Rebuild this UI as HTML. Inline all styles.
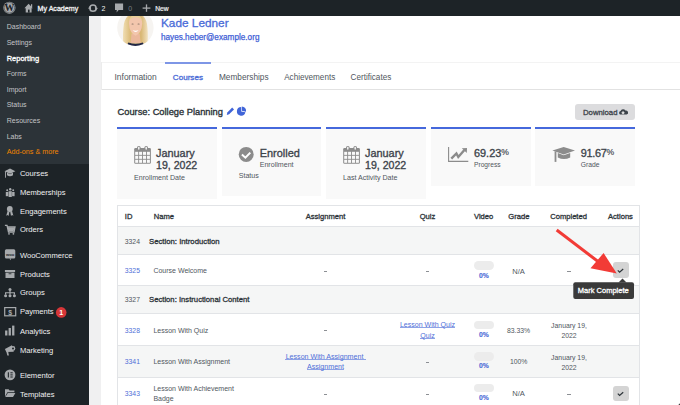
<!DOCTYPE html>
<html><head><meta charset="utf-8"><style>
html,body{margin:0;padding:0;}
body{width:680px;height:405px;overflow:hidden;position:relative;background:#f0f0f1;font-family:"Liberation Sans",sans-serif;}
.r{position:absolute;}
svg{position:absolute;left:0;top:0;}
text{font-family:"Liberation Sans",sans-serif;white-space:pre;}
</style></head><body>
<div class="r" style="left:0px;top:0px;width:680px;height:16px;background:#1d2327;"></div>
<div class="r" style="left:0px;top:16px;width:89px;height:389px;background:#1d2327;"></div>
<div class="r" style="left:0px;top:16px;width:89px;height:148px;background:#2c3338;"></div>
<div class="r" style="left:89px;top:16px;width:12px;height:389px;background:#f0f0f1;"></div>
<div class="r" style="left:101px;top:16px;width:579px;height:389px;background:#ffffff;"></div>
<div class="r" style="left:101px;top:62px;width:579px;height:1px;background:#f3f3f3;"></div>
<div class="r" style="left:101px;top:89px;width:579px;height:1px;background:#e2e2e2;"></div>
<div class="r" style="left:101px;top:62px;width:1px;height:28px;background:#ececec;"></div>
<div class="r" style="left:165px;top:62px;width:46px;height:2px;background:#7e96e6;"></div>
<div class="r" style="left:575px;top:104px;width:60px;height:16px;background:#dcdcde;border-radius:3px;"></div>
<div class="r" style="left:117px;top:127px;width:100px;height:72px;background:#f9f9f9;"></div>
<div class="r" style="left:117px;top:127px;width:100px;height:2.3px;background:#4568dc;"></div>
<div class="r" style="left:222px;top:127px;width:99px;height:69px;background:#f9f9f9;"></div>
<div class="r" style="left:222px;top:127px;width:99px;height:2.3px;background:#4568dc;"></div>
<div class="r" style="left:326px;top:127px;width:100px;height:72px;background:#f9f9f9;"></div>
<div class="r" style="left:326px;top:127px;width:100px;height:2.3px;background:#4568dc;"></div>
<div class="r" style="left:431px;top:127px;width:100px;height:58.5px;background:#f9f9f9;"></div>
<div class="r" style="left:431px;top:127px;width:100px;height:2.3px;background:#4568dc;"></div>
<div class="r" style="left:535px;top:127px;width:100px;height:58.5px;background:#f9f9f9;"></div>
<div class="r" style="left:535px;top:127px;width:100px;height:2.3px;background:#4568dc;"></div>
<div class="r" style="left:117px;top:205px;width:523px;height:1px;background:#e2e4e7;"></div>
<div class="r" style="left:117px;top:205px;width:1px;height:200px;background:#e2e4e7;"></div>
<div class="r" style="left:639px;top:205px;width:1px;height:200px;background:#e2e4e7;"></div>
<div class="r" style="left:118px;top:226px;width:521px;height:1px;background:#e2e4e7;"></div>
<div class="r" style="left:118px;top:227px;width:521px;height:27px;background:#f5f6f6;"></div>
<div class="r" style="left:118px;top:254px;width:521px;height:1px;background:#e2e4e7;"></div>
<div class="r" style="left:118px;top:285px;width:521px;height:1px;background:#e2e4e7;"></div>
<div class="r" style="left:118px;top:286px;width:521px;height:27px;background:#f5f6f6;"></div>
<div class="r" style="left:118px;top:313px;width:521px;height:1px;background:#e2e4e7;"></div>
<div class="r" style="left:118px;top:345px;width:521px;height:1px;background:#e2e4e7;"></div>
<div class="r" style="left:118px;top:346px;width:521px;height:31px;background:#f5f6f6;"></div>
<div class="r" style="left:118px;top:377px;width:521px;height:1px;background:#e2e4e7;"></div>
<div class="r" style="left:323.8px;top:271px;width:3.5px;height:0.8px;background:#8c8f94;"></div>
<div class="r" style="left:425.8px;top:271px;width:3.5px;height:0.8px;background:#8c8f94;"></div>
<div class="r" style="left:567.3px;top:271px;width:3.5px;height:0.8px;background:#8c8f94;"></div>
<div class="r" style="left:323.8px;top:330px;width:3.5px;height:0.8px;background:#8c8f94;"></div>
<div class="r" style="left:425.8px;top:362px;width:3.5px;height:0.8px;background:#8c8f94;"></div>
<div class="r" style="left:323.8px;top:394px;width:3.5px;height:0.8px;background:#8c8f94;"></div>
<div class="r" style="left:425.8px;top:394px;width:3.5px;height:0.8px;background:#8c8f94;"></div>
<div class="r" style="left:567.3px;top:394px;width:3.5px;height:0.8px;background:#8c8f94;"></div>
<div class="r" style="left:399.85px;top:327.4px;width:55.3px;height:0.7px;background:#8da2e6;"></div>
<div class="r" style="left:420.25px;top:338.4px;width:14.5px;height:0.7px;background:#8da2e6;"></div>
<div class="r" style="left:285.45px;top:359.4px;width:80.1px;height:0.7px;background:#8da2e6;"></div>
<div class="r" style="left:306.95px;top:369.4px;width:37.1px;height:0.7px;background:#8da2e6;"></div>
<div class="r" style="left:474px;top:261px;width:20px;height:8.6px;background:#ececec;border-radius:5px;"></div>
<div class="r" style="left:474px;top:320.5px;width:20px;height:8.6px;background:#ececec;border-radius:5px;"></div>
<div class="r" style="left:474px;top:352px;width:20px;height:8.6px;background:#ececec;border-radius:5px;"></div>
<div class="r" style="left:474px;top:383.8px;width:20px;height:8.6px;background:#ececec;border-radius:5px;"></div>
<div class="r" style="left:613px;top:262px;width:15.5px;height:15.8px;background:#d4d4d4;border-radius:3px;"></div>
<div class="r" style="left:613px;top:385.5px;width:15.5px;height:15.8px;background:#d4d4d4;border-radius:3px;"></div>
<svg style="left:117px;top:16px" width="37" height="30" viewBox="117 16 37 30">
<defs><clipPath id="av"><circle cx="135.4" cy="27.8" r="18.2"/></clipPath>
<linearGradient id="hair" x1="0" y1="0" x2="1" y2="0"><stop offset="0" stop-color="#f0deb4"/><stop offset="0.3" stop-color="#dcbb78"/><stop offset="0.5" stop-color="#e8cd95"/><stop offset="0.72" stop-color="#d8b672"/><stop offset="1" stop-color="#f2e2c0"/></linearGradient></defs>
<g clip-path="url(#av)">
<rect x="117" y="9" width="37" height="37" fill="#f6f4f1"/>
<path d="M123.3 44 Q122.6 36 123.4 28 Q124.3 13.5 135.5 13 Q146.7 13.5 147.5 28 Q148.2 36 147.6 42 Q144 44 141 44 L130 44 Q126 44 123.3 44 Z" fill="url(#hair)"/>
<path d="M131.6 34 L139.6 34 L140.8 43 L130.6 43 Z" fill="#ebb89c"/>
<path d="M129 23.5 Q129 16.2 135.6 15.9 Q142.2 16.2 142.2 23.5 Q142 32.5 135.6 35.8 Q129.2 32.5 129 23.5 Z" fill="#f3c6ad"/>
<path d="M128.8 21.5 Q129.3 15.3 135.6 15 Q141.9 15.3 142.4 21.5 Q139.5 17.2 135.6 17.3 Q131.7 17.2 128.8 21.5 Z" fill="#e9cf98"/>
<ellipse cx="132.6" cy="24" rx="1.1" ry="0.6" fill="#8a7466"/><ellipse cx="138.6" cy="24" rx="1.1" ry="0.6" fill="#8a7466"/>
<path d="M132.6 30.2 Q135.6 33.6 138.6 30.2 Q135.6 31.1 132.6 30.2 Z" fill="#ffffff"/>
<path d="M126.5 46 L128.4 42.4 Q135.6 45.2 142.8 42.4 L144.6 46 Z" fill="#232846"/>
</g></svg>
<svg width="680" height="405" viewBox="0 0 680 405">
<circle cx="9.4" cy="7.8" r="6.1" fill="#a7aaad"/>
<circle cx="9.4" cy="7.8" r="5.3" fill="none" stroke="#1d2327" stroke-width="0.5"/>
<text x="9.4" y="11.4" style="font-family:&quot;Liberation Serif&quot;,serif" font-weight="bold" font-size="9.8" text-anchor="middle" fill="#1d2327">W</text>
<path d="M24.4 8.3 L28.6 3.8 L32.9 8.3 L31.6 8.3 L31.6 12.6 L25.7 12.6 L25.7 8.3 Z" fill="#a7aaad"/>
<rect x="31" y="4.2" width="1.2" height="2.8" fill="#a7aaad"/>
<rect x="28" y="9.6" width="1.6" height="3" fill="#1d2327"/>
<circle cx="93" cy="8.2" r="3.1" fill="none" stroke="#a7aaad" stroke-width="1.5"/>
<path d="M88.1 8.4 L90.2 5.6 L91.2 9.2 Z" fill="#a7aaad"/>
<path d="M97.9 8 L95.8 10.8 L94.8 7.2 Z" fill="#a7aaad"/>
<path d="M115 3.6 H123.1 V9.9 H118.6 L116.6 12.4 L116.8 9.9 H115 Z" fill="#a7aaad"/>
<rect x="142.6" y="7.45" width="7.8" height="1.3" fill="#a7aaad"/>
<rect x="145.85" y="4.4" width="1.3" height="7.4" fill="#a7aaad"/>
<path d="M4.5 171.2 L10 168.5 L15.4 171.2 L10 173.8 Z" fill="#a7aaad"/>
<path d="M7 172.6 V175.3 Q10 177 13 175.3 V172.6 L10 174.2 Z" fill="#a7aaad"/>
<rect x="5.1" y="171.5" width="0.9" height="6.2" fill="#a7aaad"/>
<circle cx="10.2" cy="189.3" r="1.2" fill="#a7aaad"/><circle cx="7.2" cy="190.3" r="1" fill="#a7aaad"/><circle cx="13.2" cy="190.3" r="1" fill="#a7aaad"/>
<path d="M8.6 191.2 H11.8 V197 H8.6 Z" fill="#a7aaad"/><path d="M5.8 192 H8.3 V196.2 H5.8 Z" fill="#a7aaad"/><path d="M12.1 192 H14.6 V196.2 H12.1 Z" fill="#a7aaad"/>
<circle cx="9.8" cy="209" r="2.9" fill="#a7aaad"/>
<path d="M7.6 211 L6.2 215.7 L7.6 215 L8.6 216 L9.4 211.8 Z M12 211 L13.4 215.7 L12 215 L11 216 L10.2 211.8 Z" fill="#a7aaad"/>
<path d="M4.9 225.4 H7 L8.5 232 H14 L15 227 H7.6" fill="none" stroke="#a7aaad" stroke-width="1.3"/>
<path d="M7.6 227.5 H14.6 L13.6 231.2 H8.4 Z" fill="#a7aaad"/>
<circle cx="9" cy="233.8" r="0.9" fill="#a7aaad"/><circle cx="13.4" cy="233.8" r="0.9" fill="#a7aaad"/>
<rect x="4.9" y="249.3" width="10.4" height="9.2" rx="1.5" fill="#a7aaad"/>
<path d="M9.5 258.4 L10.3 260.2 L11.2 258.4 Z" fill="#a7aaad"/>
<text x="10.1" y="256" font-family="Liberation Sans" font-weight="bold" font-size="4.2" text-anchor="middle" fill="#1d2327">woo</text>
<rect x="4.9" y="270" width="10.2" height="2" fill="#a7aaad"/>
<rect x="5.5" y="272.6" width="9" height="5.4" fill="#a7aaad"/>
<rect x="8.6" y="273.4" width="2.8" height="0.8" fill="#1d2327"/>
<circle cx="10" cy="289.5" r="1.5" fill="#a7aaad"/>
<path d="M9.4 290.5 H10.6 V292.3 H15 V294.5 H13.8 V293.3 H10.6 V294.5 H9.4 V293.3 H6.2 V294.5 H5 V292.3 H9.4 Z" fill="#a7aaad"/>
<circle cx="5.6" cy="295.8" r="1.5" fill="#a7aaad"/><circle cx="10" cy="295.8" r="1.5" fill="#a7aaad"/><circle cx="14.4" cy="295.8" r="1.5" fill="#a7aaad"/>
<rect x="4.7" y="307.6" width="11" height="8.2" fill="none" stroke="#a7aaad" stroke-width="1.2"/>
<text x="10.2" y="314.5" font-family="Liberation Sans" font-weight="bold" font-size="7" text-anchor="middle" fill="#a7aaad">$</text>
<rect x="5.1" y="330.5" width="2.3" height="5" fill="#a7aaad"/><rect x="8.6" y="328" width="2.3" height="7.5" fill="#a7aaad"/><rect x="12.1" y="325.6" width="2.3" height="9.9" fill="#a7aaad"/>
<path d="M4.9 349 L12 345.2 L13.8 351.8 L6.3 352 Z" fill="#a7aaad"/>
<circle cx="13" cy="348.4" r="2.3" fill="#a7aaad"/><circle cx="13" cy="348.4" r="1" fill="#1d2327"/>
<path d="M6.3 351.5 L8.2 351.5 L8.9 355.6 L7.3 355.6 Z" fill="#a7aaad"/>
<circle cx="10" cy="374.9" r="5.4" fill="#a7aaad"/>
<rect x="7.8" y="372.3" width="1.1" height="5.2" fill="#1d2327"/>
<rect x="10.4" y="372.3" width="2.3" height="1" fill="#1d2327"/><rect x="10.4" y="374.4" width="2.3" height="1" fill="#1d2327"/><rect x="10.4" y="376.5" width="2.3" height="1" fill="#1d2327"/>
<path d="M5 389.2 H8.6 L9.6 390.4 H14.4 V392.2 H7.4 L5 396.8 Z" fill="#a7aaad"/>
<path d="M7.8 392.9 H15.4 L13 397.1 H5.3 Z" fill="#a7aaad"/>
<circle cx="61.2" cy="312.4" r="5.3" fill="#d63638"/>
<text x="61.2" y="315" font-family="Liberation Sans" font-weight="bold" font-size="7" text-anchor="middle" fill="#ffffff">1</text>
<path d="M226.8 115 L227.3 112.5 L232.2 107.6 L234 109.4 L229.1 114.3 Z" fill="#4165d8"/>
<path d="M241.2 111.4 L241.2 107.1 A4.3 4.3 0 1 0 245.4 112.3 Z" fill="#4165d8"/>
<path d="M241.8 110.8 L241.8 106.5 A4.3 4.3 0 0 1 246 111.7 Z" fill="#4165d8"/>
<rect x="134.2" y="148.1" width="16.7" height="15.7" rx="1.2" fill="#8c8c8c"/><rect x="137.0" y="145.9" width="3.6" height="4.6" rx="1.6" fill="#8c8c8c"/><rect x="138.1" y="146.8" width="1.4" height="3" rx="0.7" fill="#f9f9f9"/><rect x="144.39999999999998" y="145.9" width="3.6" height="4.6" rx="1.6" fill="#8c8c8c"/><rect x="145.49999999999997" y="146.8" width="1.4" height="3" rx="0.7" fill="#f9f9f9"/><rect x="135.20" y="151.80" width="3.0" height="3.07" fill="#f9f9f9"/><rect x="135.20" y="155.77" width="3.0" height="3.07" fill="#f9f9f9"/><rect x="135.20" y="159.74" width="3.0" height="3.07" fill="#f9f9f9"/><rect x="139.10" y="151.80" width="3.0" height="3.07" fill="#f9f9f9"/><rect x="139.10" y="155.77" width="3.0" height="3.07" fill="#f9f9f9"/><rect x="139.10" y="159.74" width="3.0" height="3.07" fill="#f9f9f9"/><rect x="143.00" y="151.80" width="3.0" height="3.07" fill="#f9f9f9"/><rect x="143.00" y="155.77" width="3.0" height="3.07" fill="#f9f9f9"/><rect x="143.00" y="159.74" width="3.0" height="3.07" fill="#f9f9f9"/><rect x="146.90" y="151.80" width="3.0" height="3.07" fill="#f9f9f9"/><rect x="146.90" y="155.77" width="3.0" height="3.07" fill="#f9f9f9"/><rect x="146.90" y="159.74" width="3.0" height="3.07" fill="#f9f9f9"/>
<rect x="343.2" y="148.1" width="16.7" height="15.7" rx="1.2" fill="#8c8c8c"/><rect x="346.0" y="145.9" width="3.6" height="4.6" rx="1.6" fill="#8c8c8c"/><rect x="347.1" y="146.8" width="1.4" height="3" rx="0.7" fill="#f9f9f9"/><rect x="353.4" y="145.9" width="3.6" height="4.6" rx="1.6" fill="#8c8c8c"/><rect x="354.5" y="146.8" width="1.4" height="3" rx="0.7" fill="#f9f9f9"/><rect x="344.20" y="151.80" width="3.0" height="3.07" fill="#f9f9f9"/><rect x="344.20" y="155.77" width="3.0" height="3.07" fill="#f9f9f9"/><rect x="344.20" y="159.74" width="3.0" height="3.07" fill="#f9f9f9"/><rect x="348.10" y="151.80" width="3.0" height="3.07" fill="#f9f9f9"/><rect x="348.10" y="155.77" width="3.0" height="3.07" fill="#f9f9f9"/><rect x="348.10" y="159.74" width="3.0" height="3.07" fill="#f9f9f9"/><rect x="352.00" y="151.80" width="3.0" height="3.07" fill="#f9f9f9"/><rect x="352.00" y="155.77" width="3.0" height="3.07" fill="#f9f9f9"/><rect x="352.00" y="159.74" width="3.0" height="3.07" fill="#f9f9f9"/><rect x="355.90" y="151.80" width="3.0" height="3.07" fill="#f9f9f9"/><rect x="355.90" y="155.77" width="3.0" height="3.07" fill="#f9f9f9"/><rect x="355.90" y="159.74" width="3.0" height="3.07" fill="#f9f9f9"/>
<circle cx="246.2" cy="154.4" r="7.5" fill="#8c8c8c"/>
<path d="M241.9 154.6 L245.4 157.7 L250.3 152.6" fill="none" stroke="#ffffff" stroke-width="2"/>
<path d="M448.6 147 V161.4 H468.3" fill="none" stroke="#8c8c8c" stroke-width="1.1"/>
<path d="M451.3 158.6 L456.4 153.4 L458.3 157 L464.4 150" fill="none" stroke="#8c8c8c" stroke-width="2.4"/>
<path d="M461.8 148.2 L467 148 L466.8 153 Z" fill="#8c8c8c"/>
<path d="M552.4 150.6 L563.7 147 L575 150.6 L563.7 154.4 Z" fill="#8c8c8c"/>
<path d="M557.8 153 L563.7 155.3 L570.2 153 V157.6 Q563.9 160.6 557.8 157.6 Z" fill="#8c8c8c"/>
<path d="M554.6 151.4 H556.4 V161.9 H554.6 Z" fill="#8c8c8c"/>
<path d="M620 114.6 A2 2 0 0 1 620.6 111 A2.6 2.6 0 0 1 625.4 110.6 A2 2 0 0 1 626.6 114.6 Z" fill="#3c434a"/>
<path d="M622.1 111.6 H624 V112.6 H625.1 L623.05 114.4 L621 112.6 H622.1 Z" fill="#dedede"/>
<text x="37.6" y="11" font-size="7.1" fill="#f0f0f1" stroke="#f0f0f1" stroke-width="0.3">My Academy</text>
<text x="101.6" y="11" font-size="7" fill="#f0f0f1">2</text>
<text x="128.2" y="11" font-size="7" fill="#7c7f84">0</text>
<text x="155.2" y="11" font-size="6.7" fill="#f0f0f1" stroke="#f0f0f1" stroke-width="0.2">New</text>
<text x="6.7" y="29" font-size="7.0" fill="#c3c4c7">Dashboard</text>
<text x="6.7" y="45" font-size="7.0" fill="#c3c4c7">Settings</text>
<text x="6.7" y="61" font-size="7.5" fill="#ffffff" stroke="#ffffff" stroke-width="0.3">Reporting</text>
<text x="6.7" y="76" font-size="7.0" fill="#c3c4c7">Forms</text>
<text x="6.7" y="92" font-size="7.0" fill="#c3c4c7">Import</text>
<text x="6.7" y="107" font-size="7.0" fill="#c3c4c7">Status</text>
<text x="6.7" y="123" font-size="7.0" fill="#c3c4c7">Resources</text>
<text x="6.7" y="139" font-size="7.0" fill="#c3c4c7">Labs</text>
<text x="6.7" y="154" font-size="7.2" fill="#f18500">Add-ons &amp; more</text>
<text x="19.9" y="176" font-size="7.6" fill="#f0f0f1">Courses</text>
<text x="19.9" y="195" font-size="7.6" fill="#f0f0f1">Memberships</text>
<text x="19.9" y="214" font-size="7.6" fill="#f0f0f1">Engagements</text>
<text x="19.9" y="232" font-size="7.6" fill="#f0f0f1">Orders</text>
<text x="19.9" y="258" font-size="7.6" fill="#f0f0f1">WooCommerce</text>
<text x="19.9" y="277" font-size="7.6" fill="#f0f0f1">Products</text>
<text x="19.9" y="295" font-size="7.6" fill="#f0f0f1">Groups</text>
<text x="19.9" y="314" font-size="7.6" fill="#f0f0f1">Payments</text>
<text x="19.9" y="334" font-size="7.6" fill="#f0f0f1">Analytics</text>
<text x="19.9" y="353" font-size="7.6" fill="#f0f0f1">Marketing</text>
<text x="19.9" y="378" font-size="7.6" fill="#f0f0f1">Elementor</text>
<text x="19.9" y="397" font-size="7.6" fill="#f0f0f1">Templates</text>
<text x="161" y="27" font-size="11.8" fill="#4a6bd8" stroke="#4a6bd8" stroke-width="0.3">Kade Ledner</text>
<text x="161" y="40" font-size="8.2" fill="#3f60d6" stroke="#3f60d6" stroke-width="0.25">hayes.heber@example.org</text>
<text x="114.5" y="80" font-size="8.45" fill="#50575e">Information</text>
<text x="172.8" y="80" font-size="8.1" fill="#4f6fd8" stroke="#4f6fd8" stroke-width="0.35">Courses</text>
<text x="219" y="80" font-size="8.25" fill="#50575e">Memberships</text>
<text x="284.2" y="80" font-size="8.15" fill="#50575e">Achievements</text>
<text x="350.6" y="80" font-size="8.15" fill="#50575e">Certificates</text>
<text x="117.5" y="115" font-size="9.3" fill="#2c3338" stroke="#2c3338" stroke-width="0.35">Course: College Planning</text>
<text x="583" y="115" font-size="7.75" fill="#3c434a" stroke="#3c434a" stroke-width="0.3">Download</text>
<text x="156" y="157" font-size="10.9" fill="#3c434a" stroke="#3c434a" stroke-width="0.33">January</text>
<text x="156" y="169" font-size="10.6" fill="#3c434a" stroke="#3c434a" stroke-width="0.33">19, 2022</text>
<text x="134" y="180" font-size="7.1" fill="#50575e">Enrollment Date</text>
<text x="259.7" y="157" font-size="10.95" fill="#3c434a" stroke="#3c434a" stroke-width="0.33">Enrolled</text>
<text x="259.7" y="167" font-size="7.1" fill="#50575e">Enrollment</text>
<text x="238.7" y="178" font-size="7.1" fill="#50575e">Status</text>
<text x="365" y="157" font-size="10.9" fill="#3c434a" stroke="#3c434a" stroke-width="0.33">January</text>
<text x="365" y="169" font-size="10.6" fill="#3c434a" stroke="#3c434a" stroke-width="0.33">19, 2022</text>
<text x="343" y="180" font-size="7.1" fill="#50575e">Last Activity Date</text>
<text x="474" y="157" font-size="10.9" fill="#3c434a" stroke="#3c434a" stroke-width="0.33">69.23<tspan font-size="8.6" stroke-width="0.15" dy="-2.2">%</tspan></text>
<text x="474" y="167" font-size="6.65" fill="#50575e">Progress</text>
<text x="580.8" y="157" font-size="10.9" fill="#3c434a" stroke="#3c434a" stroke-width="0.33" letter-spacing="-0.3">91.67<tspan font-size="8.6" stroke-width="0.15" dy="-2.2">%</tspan></text>
<text x="580.8" y="167" font-size="6.75" fill="#50575e">Grade</text>
<text x="124.8" y="219" font-size="7.6" fill="#2c3338" stroke="#2c3338" stroke-width="0.3">ID</text>
<text x="153.7" y="219" font-size="7.6" fill="#2c3338" stroke="#2c3338" stroke-width="0.3">Name</text>
<text x="305.7" y="219" font-size="7.6" fill="#2c3338" stroke="#2c3338" stroke-width="0.3">Assignment</text>
<text x="419.7" y="219" font-size="7.6" fill="#2c3338" stroke="#2c3338" stroke-width="0.3">Quiz</text>
<text x="474" y="219" font-size="7.6" fill="#2c3338" stroke="#2c3338" stroke-width="0.3">Video</text>
<text x="508.3" y="219" font-size="7.6" fill="#2c3338" stroke="#2c3338" stroke-width="0.3">Grade</text>
<text x="550.2" y="219" font-size="7.6" fill="#2c3338" stroke="#2c3338" stroke-width="0.3">Completed</text>
<text x="608" y="219" font-size="7.6" fill="#2c3338" stroke="#2c3338" stroke-width="0.3">Actions</text>
<text x="124.8" y="244" font-size="6.8" fill="#50575e">3324</text>
<text x="149" y="244" font-size="7.75" fill="#2c3338" stroke="#2c3338" stroke-width="0.3">Section: Introduction</text>
<text x="124.8" y="273" font-size="6.8" fill="#4f6fd8">3325</text>
<text x="153.4" y="273" font-size="7.0" fill="#50575e">Course Welcome</text>
<text x="124.8" y="302" font-size="6.8" fill="#50575e">3327</text>
<text x="149" y="302" font-size="7.7" fill="#2c3338" stroke="#2c3338" stroke-width="0.3">Section: Instructional Content</text>
<text x="124.8" y="333" font-size="6.8" fill="#4f6fd8">3328</text>
<text x="153.4" y="333" font-size="7.0" fill="#50575e">Lesson With Quiz</text>
<text x="124.8" y="364" font-size="6.8" fill="#4f6fd8">3341</text>
<text x="153.4" y="364" font-size="7.0" fill="#50575e">Lesson With Assignment</text>
<text x="124.8" y="396" font-size="6.8" fill="#4f6fd8">3343</text>
<text x="153.4" y="391" font-size="7.0" fill="#50575e">Lesson With Achievement</text>
<text x="153.4" y="401" font-size="7.0" fill="#50575e">Badge</text>
<text x="427.5" y="327" font-size="7.06" fill="#4f6fd8" text-anchor="middle">Lesson With Quiz</text>
<text x="427.5" y="338" font-size="7.06" fill="#4f6fd8" text-anchor="middle">Quiz</text>
<text x="325.5" y="359" font-size="7.1" fill="#4f6fd8" text-anchor="middle">Lesson With Assignment&#160;</text>
<text x="325.5" y="369" font-size="7.1" fill="#4f6fd8" text-anchor="middle">Assignment</text>
<text x="483.9" y="278" font-size="6.8" fill="#4f6fd8" font-weight="bold" text-anchor="middle" stroke="#4f6fd8" stroke-width="0.15">0%</text>
<text x="483.9" y="337" font-size="6.8" fill="#4f6fd8" font-weight="bold" text-anchor="middle" stroke="#4f6fd8" stroke-width="0.15">0%</text>
<text x="483.9" y="368" font-size="6.8" fill="#4f6fd8" font-weight="bold" text-anchor="middle" stroke="#4f6fd8" stroke-width="0.15">0%</text>
<text x="483.9" y="400" font-size="6.8" fill="#4f6fd8" font-weight="bold" text-anchor="middle" stroke="#4f6fd8" stroke-width="0.15">0%</text>
<text x="518.5" y="274" font-size="7.6" fill="#50575e" text-anchor="middle">N/A</text>
<text x="518.6" y="333" font-size="6.85" fill="#50575e" text-anchor="middle">83.33%</text>
<text x="518.7" y="364" font-size="6.85" fill="#50575e" text-anchor="middle">100%</text>
<text x="518.5" y="396" font-size="7.6" fill="#50575e" text-anchor="middle">N/A</text>
<text x="569" y="328" font-size="6.85" fill="#50575e" text-anchor="middle">January 19,</text>
<text x="569" y="338" font-size="6.85" fill="#50575e" text-anchor="middle">2022</text>
<text x="569" y="360" font-size="6.85" fill="#50575e" text-anchor="middle">January 19,</text>
<text x="569" y="370" font-size="6.85" fill="#50575e" text-anchor="middle">2022</text>
<path d="M617.8 270.4 L619.6 272.2 L623.2 269" fill="none" stroke="#2c3338" stroke-width="1.2"/>
<path d="M617.8 393.7 L619.6 395.5 L623.2 392.3" fill="none" stroke="#2c3338" stroke-width="1.2"/>
<rect x="573.3" y="282.2" width="60.7" height="16.7" rx="2" fill="#3a3a3a"/>
<path d="M618.5 282.5 L622.5 278.5 L626.5 282.5 Z" fill="#3a3a3a"/>
<text x="577.8" y="293" font-size="7.5" stroke="#ffffff" stroke-width="0.3" fill="#ffffff">Mark Complete</text>
<path d="M556.7 230 L600 263" stroke="#f23b36" stroke-width="3" fill="none"/>
<path d="M590.5 268.2 L603.6 253 L616.8 273.5 Z" fill="#f23b36"/>
<defs><radialGradient id="cm"><stop offset="0" stop-color="#222"/><stop offset="0.5" stop-color="#444"/><stop offset="1" stop-color="#fff" stop-opacity="0"/></radialGradient></defs><circle cx="680.5" cy="405.5" r="3" fill="url(#cm)"/>
</svg>
</body></html>
